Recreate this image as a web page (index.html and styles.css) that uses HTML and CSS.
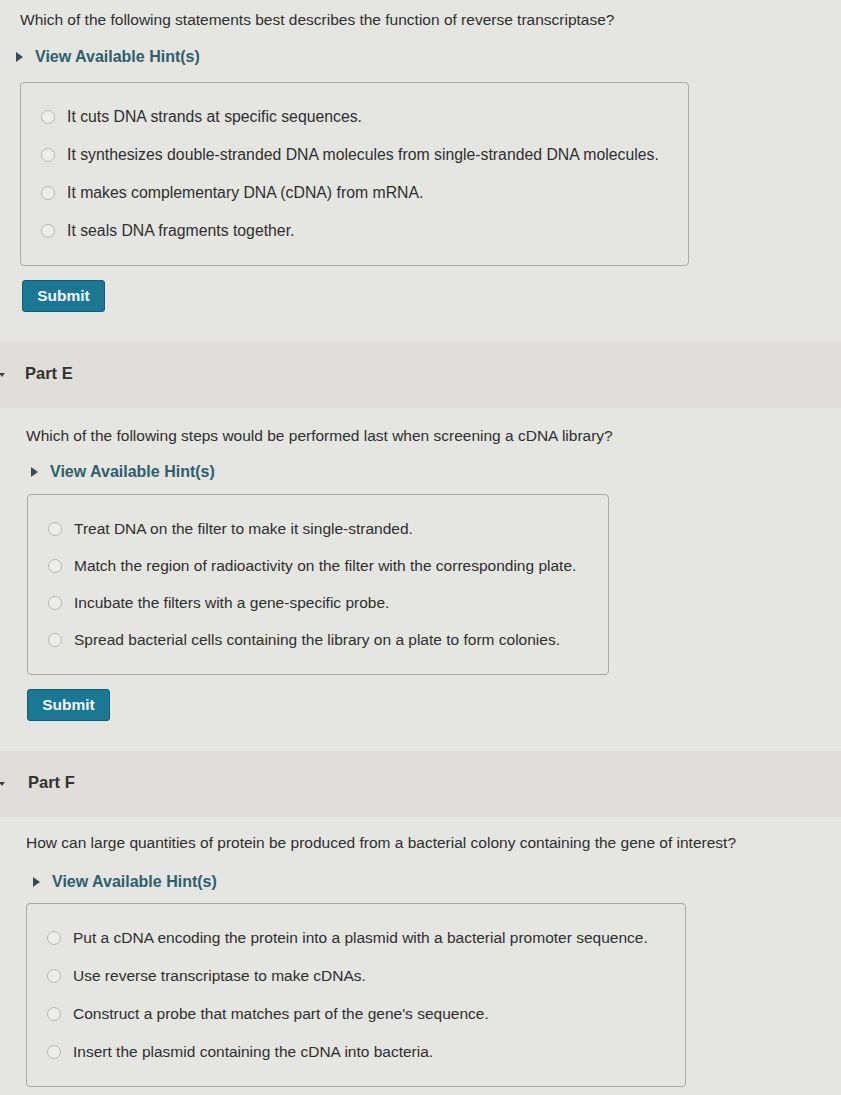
FILE: index.html
```html
<!DOCTYPE html>
<html lang="en">
<head>
<meta charset="utf-8">
<title>Parts</title>
<link rel="stylesheet" href="styles.css">
</head>
<body>
<section class="part part-d">
  <p class="question">Which of the following statements best describes the function of reverse transcriptase?</p>
  <div class="hint"><span class="tri"></span>View Available Hint(s)</div>
  <div class="choices box-d">
    <label class="choice"><span class="radio"></span>It cuts DNA strands at specific sequences.</label>
    <label class="choice"><span class="radio"></span>It synthesizes double-stranded DNA molecules from single-stranded DNA molecules.</label>
    <label class="choice"><span class="radio"></span>It makes complementary DNA (cDNA) from mRNA.</label>
    <label class="choice"><span class="radio"></span>It seals DNA fragments together.</label>
  </div>
  <button class="submit">Submit</button>
</section>

<div class="band band-e"><span class="caret"></span><span class="band-title">Part E</span></div>

<section class="part part-e">
  <p class="question">Which of the following steps would be performed last when screening a cDNA library?</p>
  <div class="hint"><span class="tri"></span>View Available Hint(s)</div>
  <div class="choices box-e">
    <label class="choice"><span class="radio"></span>Treat DNA on the filter to make it single-stranded.</label>
    <label class="choice"><span class="radio"></span>Match the region of radioactivity on the filter with the corresponding plate.</label>
    <label class="choice"><span class="radio"></span>Incubate the filters with a gene-specific probe.</label>
    <label class="choice"><span class="radio"></span>Spread bacterial cells containing the library on a plate to form colonies.</label>
  </div>
  <button class="submit">Submit</button>
</section>

<div class="band band-f"><span class="caret"></span><span class="band-title">Part F</span></div>

<section class="part part-f">
  <p class="question">How can large quantities of protein be produced from a bacterial colony containing the gene of interest?</p>
  <div class="hint"><span class="tri"></span>View Available Hint(s)</div>
  <div class="choices box-f">
    <label class="choice"><span class="radio"></span>Put a cDNA encoding the protein into a plasmid with a bacterial promoter sequence.</label>
    <label class="choice"><span class="radio"></span>Use reverse transcriptase to make cDNAs.</label>
    <label class="choice"><span class="radio"></span>Construct a probe that matches part of the gene's sequence.</label>
    <label class="choice"><span class="radio"></span>Insert the plasmid containing the cDNA into bacteria.</label>
  </div>
</section>
</body>
</html>
```

FILE: styles.css
```css
html, body {
  margin: 0;
  padding: 0;
}
body {
  width: 841px;
  height: 1095px;
  overflow: hidden;
  background: #e5e5e2;
  font-family: "Liberation Sans", Arial, sans-serif;
  font-size: 15.5px;
  color: #2f2f2f;
}
.part {
  display: flex;
  flex-direction: column;
  align-items: flex-start;
}
.part-d { padding: 10px 0 0 20px; }
.part-e { padding: 18px 0 0 26px; }
.part-f { padding: 16px 0 0 26px; }

.question {
  margin: 0;
  line-height: 20px;
  height: 20px;
}
.hint {
  display: flex;
  align-items: center;
  gap: 12px;
  margin: 17px 0 0 -4px;
  line-height: 20px;
  font-size: 16px;
  font-weight: bold;
  color: #2f5f6d;
}
.part-e .hint { margin-top: 16px; margin-left: 5px; }
.part-f .hint { margin-top: 19px; margin-left: 7px; }
.tri {
  width: 0;
  height: 0;
  border-top: 5px solid transparent;
  border-bottom: 5px solid transparent;
  border-left: 7px solid #3a4c54;
}
.choices {
  margin-top: 15px;
  border: 1px solid #a9a9a7;
  border-radius: 4px;
  padding: 15px 0;
  display: flex;
  flex-direction: column;
  box-sizing: border-box;
}
.box-d { width: 669px; height: 184px; }
.box-e { width: 582px; height: 181px; margin-left: 1px; margin-top: 12px; }
.box-f { width: 660px; height: 184px; margin-top: 11px; }
.choice {
  display: flex;
  align-items: center;
  height: 38px;
  padding-left: 20px;
  gap: 12px;
}
.box-d .choice { height: 38.5px; font-size: 15.8px; }
.box-f .choice { height: 38.5px; }
.radio {
  width: 12px;
  height: 12px;
  border-radius: 50%;
  border: 1px solid #b6b6b4;
  background: #ededeb;
  flex: none;
}
.submit {
  margin-top: 14px;
  width: 83px;
  height: 32px;
  border: 1px solid #0f5e74;
  border-radius: 3px;
  background: #1a7893;
  color: #f2f6f7;
  font-family: "Liberation Sans", Arial, sans-serif;
  font-size: 15.5px;
  font-weight: bold;
  padding: 0;
}
.part-d .submit { margin-left: 2px; }
.part-e .submit { margin-left: 1px; }

.band {
  display: flex;
  align-items: center;
  background: #dfdedb;
  height: 66px;
  margin-top: 30px;
  gap: 20px;
}
.band-e { height: 66px; }
.band-f { height: 66px; margin-top: 30px; }
.caret {
  width: 0;
  height: 0;
  border-left: 3px solid transparent;
  border-right: 3px solid transparent;
  border-top: 4px solid #444;
  margin-left: -1px;
}
.band-title {
  font-size: 16.5px;
  font-weight: bold;
  color: #333;
}
.band-e .band-title { margin-top: -4px; }
.band-f .band-title { margin-left: 3px; margin-top: -4px; }
```
